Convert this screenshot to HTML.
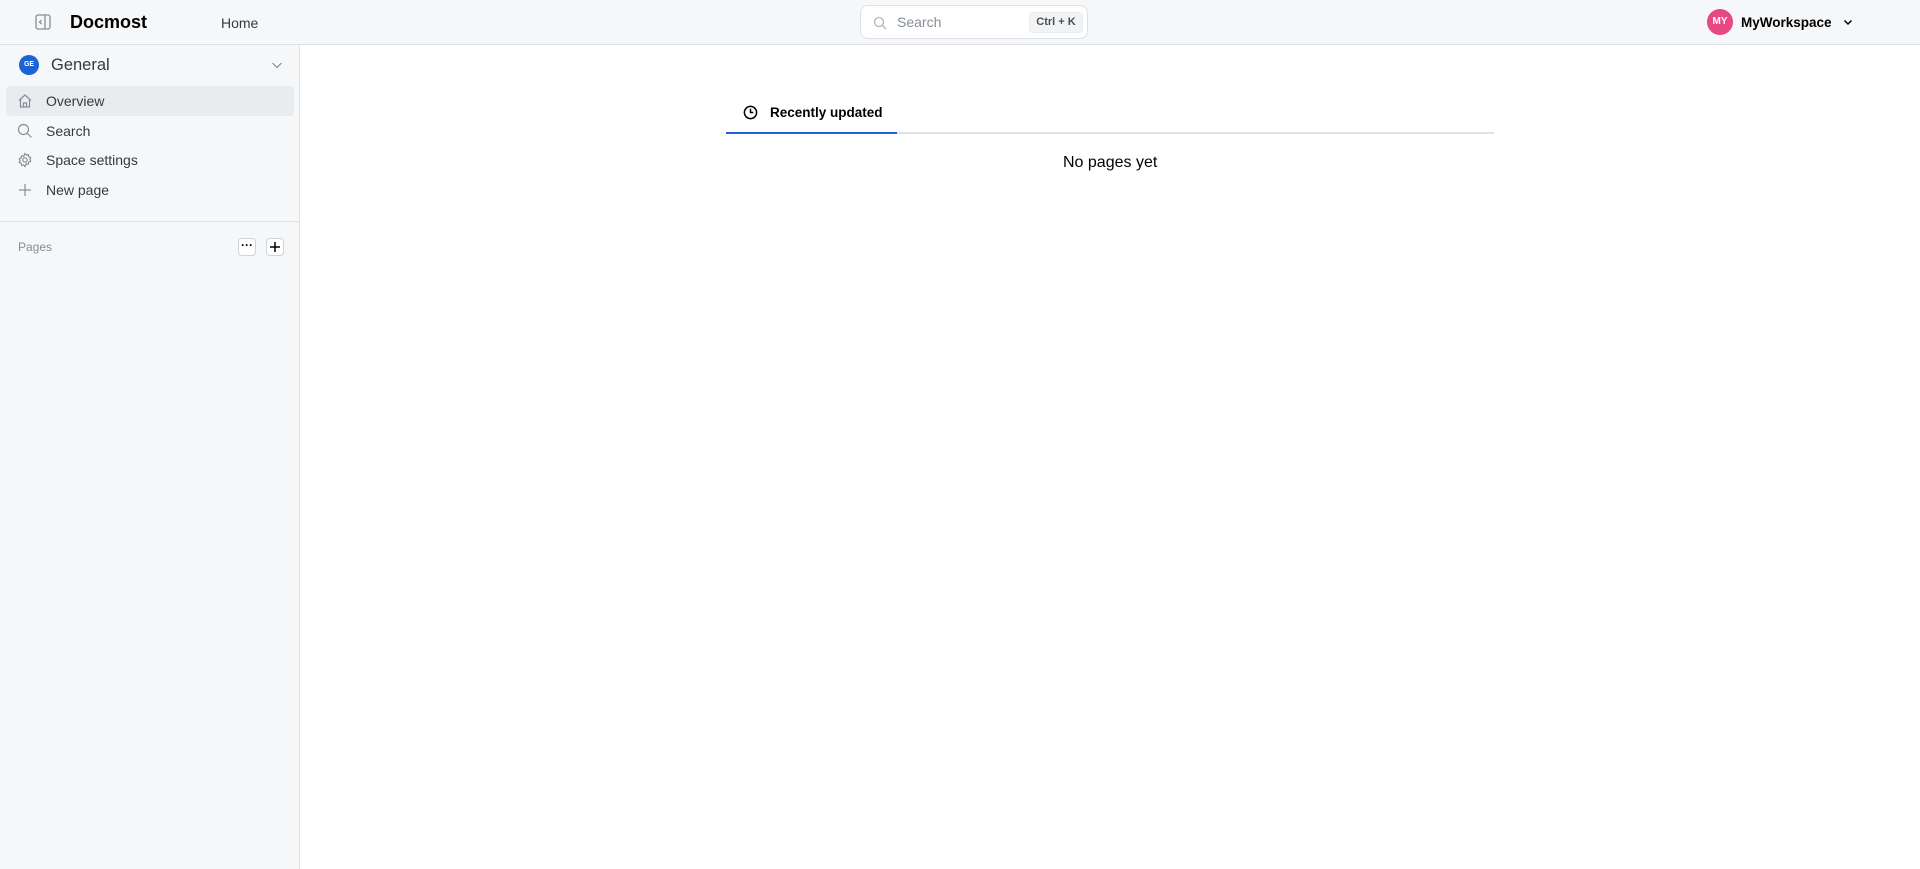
<!DOCTYPE html>
<html><head><meta charset="utf-8"><style>
*{box-sizing:border-box;margin:0;padding:0}
body{width:1920px;height:869px;overflow:hidden;font-family:"Liberation Sans",sans-serif;background:#fff;color:#000;position:relative}
.hdr{position:absolute;left:0;top:0;width:1920px;height:45px;background:#f6f7f9;border-bottom:1px solid #dee2e6}
.side{position:absolute;left:0;top:45px;width:300px;height:824px;background:#f6f7f9;border-right:1px solid #dee2e6}
.abs{position:absolute}
.row{position:absolute;left:6px;width:288px;height:30px;border-radius:4px;display:flex;align-items:center;font-size:14px;color:#343a40}
.row svg{position:absolute;left:11px}
.row span{position:absolute;left:40px}
</style></head><body>
<div class="hdr">
 <svg class="abs" style="left:35px;top:14px" width="16" height="16" viewBox="0 0 16 16" fill="none" stroke="#868e96" stroke-width="1.3"><rect x="1" y="1" width="14" height="14" rx="2"/><path d="M10 1v14M6.5 6l-2 2 2 2"/></svg>
 <div class="abs" style="left:70px;top:12px;font-size:18px;font-weight:bold;color:#000">Docmost</div>
 <div class="abs" style="left:221px;top:15px;font-size:14px;color:#343a40">Home</div>
 <div class="abs" style="left:860px;top:5px;width:228px;height:34px;border:1px solid #dee2e6;border-radius:8px;background:#fff">
  <svg class="abs" style="left:12px;top:10px" width="14" height="14" viewBox="0 0 14 14" fill="none" stroke="#adb5bd" stroke-width="1.3"><circle cx="6" cy="6" r="4.5"/><path d="M9.5 9.5l3.5 3.5"/></svg>
  <div class="abs" style="left:36px;top:8px;font-size:14px;color:#868e96">Search</div>
  <div class="abs" style="left:168px;top:6px;width:54px;height:21px;background:#f1f3f5;border:1px solid #e9ecef;border-radius:4px;font-size:11px;font-weight:bold;color:#495057;text-align:center;line-height:19px">Ctrl + K</div>
 </div>
 <div class="abs" style="left:1707px;top:9px;width:26px;height:26px;border-radius:50%;background:#e64980;color:#fff;font-size:10px;font-weight:bold;text-align:center;line-height:26px">MY</div>
 <div class="abs" style="left:1741px;top:15px;font-size:13.5px;font-weight:bold;color:#000">MyWorkspace</div>
 <svg class="abs" style="left:1842px;top:16px" width="12" height="12" viewBox="0 0 12 12" fill="none" stroke="#000" stroke-width="1.5"><path d="M2.5 4.5L6 8l3.5-3.5"/></svg>
</div>
<div class="side">
 <div class="abs" style="left:19px;top:10px;width:20px;height:20px;border-radius:50%;background:#1c63d6;color:#fff;font-size:7px;font-weight:bold;text-align:center;line-height:20px">GE</div>
 <div class="abs" style="left:51px;top:11px;font-size:16.5px;color:#343a40">General</div>
 <svg class="abs" style="left:271px;top:14px" width="12" height="12" viewBox="0 0 12 12" fill="none" stroke="#868e96" stroke-width="1.2"><path d="M1.5 4l4.5 4.5L10.5 4"/></svg>
 <div class="row" style="top:41px;background:#e9ecef"><svg width="16" height="16" viewBox="0 0 16 16" fill="none" stroke="#868e96" stroke-width="1.2"><path d="M2 7.5L8 2l6 5.5M3.5 6.5V14h9V6.5M6.5 14V10h3v4"/></svg><span>Overview</span></div>
 <div class="row" style="top:71px"><svg width="16" height="16" viewBox="0 0 16 16" fill="none" stroke="#868e96" stroke-width="1.2"><circle cx="6.5" cy="6.5" r="5"/><path d="M10.5 10.5l4 4"/></svg><span>Search</span></div>
 <div class="row" style="top:100px"><svg width="16" height="16" viewBox="0 0 16 16" fill="none" stroke="#868e96" stroke-width="1.2"><circle cx="8" cy="8" r="2.2"/><path d="M8 1.5l1.3 1.6 2-.5.5 2 1.9.9-.8 1.9.8 1.9-1.9.9-.5 2-2-.5L8 14.5l-1.3-1.6-2 .5-.5-2-1.9-.9.8-1.9-.8-1.9 1.9-.9.5-2 2 .5z"/></svg><span>Space settings</span></div>
 <div class="row" style="top:130px"><svg width="16" height="16" viewBox="0 0 16 16" fill="none" stroke="#868e96" stroke-width="1.2"><path d="M8 2v12M2 8h12"/></svg><span>New page</span></div>
 <div class="abs" style="left:0;top:176px;width:299px;height:1px;background:#dee2e6"></div>
 <div class="abs" style="left:18px;top:195px;font-size:12px;color:#868e96">Pages</div>
 <div class="abs" style="left:238px;top:193px;width:18px;height:18px;border:1px solid #ced4da;border-radius:4px;background:#fff;font-size:12px;font-weight:bold;text-align:center;line-height:12px;color:#000">···</div>
 <div class="abs" style="left:266px;top:193px;width:18px;height:18px;border:1px solid #ced4da;border-radius:4px;background:#fff"><svg class="abs" style="left:3px;top:3px" width="10" height="10" viewBox="0 0 10 10" stroke="#000" stroke-width="1.5"><path d="M5 0v10M0 5h10"/></svg></div>
</div>
<div class="abs" style="left:726px;top:132px;width:768px;height:2px;background:#dee2e6"></div>
<div class="abs" style="left:726px;top:132px;width:171px;height:2px;background:#1c63d6"></div>
<svg class="abs" style="left:743px;top:105px" width="15" height="15" viewBox="0 0 16 16" fill="none" stroke="#000" stroke-width="1.6"><circle cx="8" cy="8" r="6.5"/><path d="M8 4v4h3"/></svg>
<div class="abs" style="left:770px;top:105px;font-size:13.5px;font-weight:bold;color:#000">Recently updated</div>
<div class="abs" style="left:1063px;top:154px;font-size:16px;color:#000">No pages yet</div>
</body></html>
